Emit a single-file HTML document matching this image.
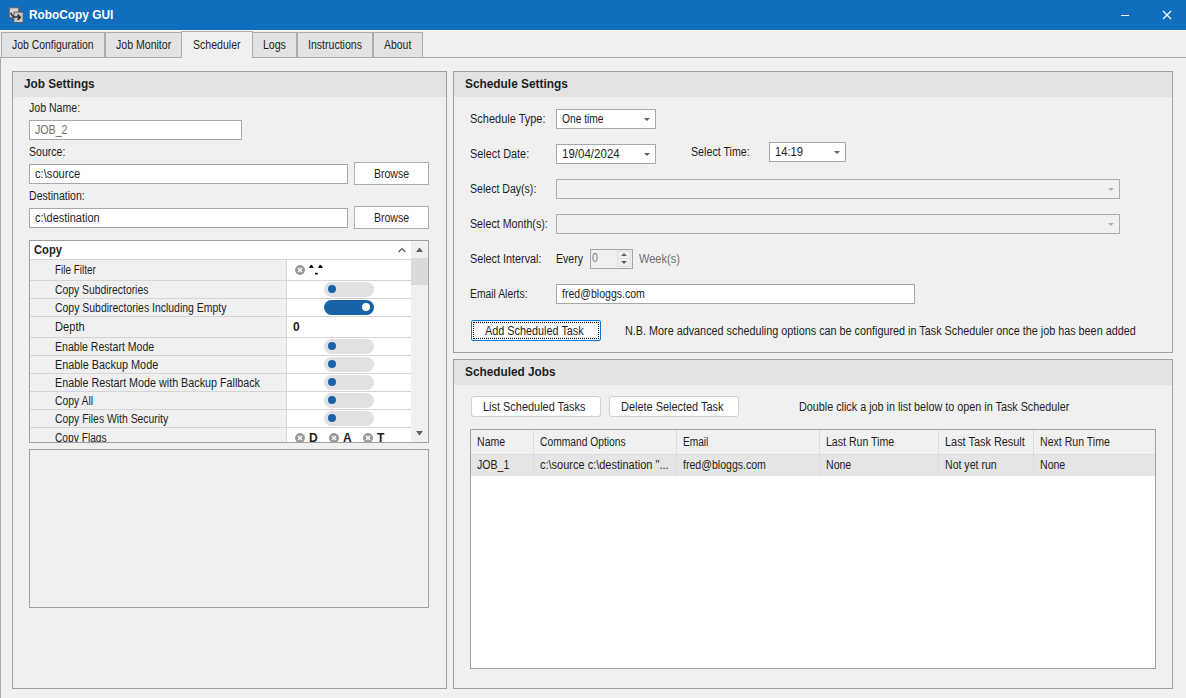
<!DOCTYPE html>
<html><head><meta charset="utf-8"><title>RoboCopy GUI</title>
<style>
html,body{margin:0;padding:0;}
body{width:1186px;height:698px;overflow:hidden;position:relative;background:#f0f0f0;font-family:"Liberation Sans",sans-serif;font-size:12px;}
.r{position:absolute;}
.t{position:absolute;white-space:nowrap;line-height:12px;transform-origin:0 0;}
</style></head><body>
<div class="r" style="left:0px;top:0px;width:1186px;height:30px;background:#116ebf;"></div>
<div class="r" style="left:0px;top:30px;width:1186px;height:1px;background:#f7f7f7;"></div>
<svg class="r" style="left:7px;top:6px" width="18" height="18" viewBox="0 0 18 18"><rect x="2.3" y="1.8" width="9.3" height="9.9" fill="#d4d4d4" stroke="#6a5f58" stroke-width="0.9"/><rect x="6.9" y="6.1" width="9.2" height="10.4" fill="#c8c8c8" stroke="#5d5650" stroke-width="0.9"/><path d="M3.6 6.8 Q5 9.6 6.8 10.8 L12.8 11.3" fill="none" stroke="#2a2a2a" stroke-width="1.5"/><path d="M10.6 8.6 L13.3 11.3 L10.6 14" fill="none" stroke="#2a2a2a" stroke-width="1.5"/></svg>
<div class="t" style="left:29px;top:9px;color:#fff;font-weight:bold;transform:scaleX(0.988);">RoboCopy GUI</div>
<div class="r" style="left:1121px;top:15px;width:8px;height:1px;background:#fff;"></div>
<svg class="r" style="left:1162px;top:10px" width="10" height="10" viewBox="0 0 10 10"><path d="M1 1 L9 9 M9 1 L1 9" stroke="#fff" stroke-width="1.1"/></svg>
<div class="r" style="left:0px;top:57px;width:1186px;height:1px;background:#acacac;"></div>
<div class="r" style="left:0px;top:57px;width:1px;height:641px;background:#acacac;"></div>
<div class="r" style="left:1px;top:32px;width:104px;height:26px;background:#e3e3e3;border:1px solid #acacac;box-sizing:border-box;"></div>
<div class="t" style="left:12px;top:39px;color:#1e1e1e;transform:scaleX(0.868);">Job Configuration</div>
<div class="r" style="left:105px;top:32px;width:77px;height:26px;background:#e3e3e3;border:1px solid #acacac;box-sizing:border-box;"></div>
<div class="t" style="left:116px;top:39px;color:#1e1e1e;transform:scaleX(0.88);">Job Monitor</div>
<div class="r" style="left:252px;top:32px;width:45px;height:26px;background:#e3e3e3;border:1px solid #acacac;box-sizing:border-box;"></div>
<div class="t" style="left:263px;top:39px;color:#1e1e1e;transform:scaleX(0.88);">Logs</div>
<div class="r" style="left:297px;top:32px;width:76px;height:26px;background:#e3e3e3;border:1px solid #acacac;box-sizing:border-box;"></div>
<div class="t" style="left:307.5px;top:39px;color:#1e1e1e;transform:scaleX(0.88);">Instructions</div>
<div class="r" style="left:373px;top:32px;width:50px;height:26px;background:#e3e3e3;border:1px solid #acacac;box-sizing:border-box;"></div>
<div class="t" style="left:384px;top:39px;color:#1e1e1e;transform:scaleX(0.87);">About</div>
<div class="r" style="left:181px;top:31px;width:72px;height:27px;background:#f0f0f0;border:1px solid #acacac;border-bottom:none;box-sizing:border-box"></div>
<div class="t" style="left:192.5px;top:39px;color:#1e1e1e;transform:scaleX(0.88);">Scheduler</div>
<div class="r" style="left:12px;top:71px;width:435px;height:618px;border:1px solid #a0a0a0;box-sizing:border-box;"></div>
<div class="r" style="left:13px;top:72px;width:433px;height:25px;background:#e3e3e3;"></div>
<div class="t" style="left:23.5px;top:78px;color:#1e1e1e;font-weight:bold;transform:scaleX(0.981);">Job Settings</div>
<div class="r" style="left:453px;top:71px;width:720px;height:282px;border:1px solid #a0a0a0;box-sizing:border-box;"></div>
<div class="r" style="left:454px;top:72px;width:718px;height:25px;background:#e3e3e3;"></div>
<div class="t" style="left:464.5px;top:78px;color:#1e1e1e;font-weight:bold;transform:scaleX(0.989);">Schedule Settings</div>
<div class="r" style="left:453px;top:359px;width:720px;height:330px;border:1px solid #a0a0a0;box-sizing:border-box;"></div>
<div class="r" style="left:454px;top:360px;width:718px;height:25px;background:#e3e3e3;"></div>
<div class="t" style="left:464.5px;top:366px;color:#1e1e1e;font-weight:bold;transform:scaleX(0.984);">Scheduled Jobs</div>
<div class="t" style="left:29px;top:102px;color:#1e1e1e;transform:scaleX(0.88);">Job Name:</div>
<div class="r" style="left:29px;top:120px;width:213px;height:20px;background:#fff;border:1px solid #a8a8a8;box-sizing:border-box;"></div>
<div class="t" style="left:35px;top:124px;color:#6d6d6d;transform:scaleX(0.885);">JOB_2</div>
<div class="t" style="left:29px;top:146px;color:#1e1e1e;transform:scaleX(0.88);">Source:</div>
<div class="r" style="left:29px;top:164px;width:319px;height:20px;background:#fff;border:1px solid #a8a8a8;box-sizing:border-box;"></div>
<div class="t" style="left:35px;top:168px;color:#1e1e1e;transform:scaleX(0.931);">c:\source</div>
<div class="r" style="left:354px;top:162px;width:75px;height:23px;background:#fff;border:1px solid #adadad;box-sizing:border-box;border-radius:0px;"></div>
<div class="t" style="left:374px;top:168px;color:#1e1e1e;transform:scaleX(0.875);">Browse</div>
<div class="t" style="left:29px;top:190px;color:#1e1e1e;transform:scaleX(0.88);">Destination:</div>
<div class="r" style="left:29px;top:208px;width:319px;height:20px;background:#fff;border:1px solid #a8a8a8;box-sizing:border-box;"></div>
<div class="t" style="left:35px;top:212px;color:#1e1e1e;transform:scaleX(0.914);">c:\destination</div>
<div class="r" style="left:354px;top:206px;width:75px;height:23px;background:#fff;border:1px solid #adadad;box-sizing:border-box;border-radius:0px;"></div>
<div class="t" style="left:374px;top:212px;color:#1e1e1e;transform:scaleX(0.875);">Browse</div>
<div class="r" style="left:29px;top:240px;width:400px;height:203px;border:1px solid #a0a0a0;box-sizing:border-box;background:#fff;overflow:hidden">
<div class="t" style="left:4px;top:3px;color:#1e1e1e;font-weight:bold;transform:scaleX(0.93);">Copy</div>
<svg class="r" style="left:368px;top:6px" width="8" height="6" viewBox="0 0 8 6"><path d="M0.6 5 L4 1.5 L7.4 5" fill="none" stroke="#555" stroke-width="1.2"/></svg>
<div class="r" style="left:0px;top:18px;width:381px;height:1px;background:#d4d4d4"></div>
<div class="r" style="left:0px;top:19px;width:256px;height:20px;background:#f0f0f0"></div>
<div class="r" style="left:256px;top:19px;width:1px;height:20px;background:#d4d4d4"></div>
<div class="t" style="left:25px;top:23px;color:#1e1e1e;transform:scaleX(0.825);">File Filter</div>
<svg class="r" style="left:265px;top:24px" width="10" height="10" viewBox="0 0 10 10"><circle cx="5" cy="5" r="5" fill="#999"/><path d="M3 3 L7 7 M7 3 L3 7" stroke="#fff" stroke-width="1.4"/></svg>
<svg class="r" style="left:278px;top:22px" width="16" height="13" viewBox="0 0 16 13"><path d="M1.1 5 Q3.3 -1.6 5.5 5 Z" fill="#000"/><path d="M10.1 5 Q12.4 -1.6 14.7 5 Z" fill="#000"/><rect x="7" y="9.8" width="2.8" height="1.6" fill="#000"/></svg>
<div class="r" style="left:0px;top:39px;width:381px;height:1px;background:#d4d4d4"></div>
<div class="r" style="left:0px;top:40px;width:256px;height:17px;background:#f0f0f0"></div>
<div class="r" style="left:256px;top:40px;width:1px;height:17px;background:#d4d4d4"></div>
<div class="t" style="left:25px;top:43px;color:#1e1e1e;transform:scaleX(0.864);">Copy Subdirectories</div>
<div class="r" style="left:294px;top:41px;width:50px;height:15px;border-radius:8px;background:#e1e1e1"></div>
<div class="r" style="left:298px;top:44px;width:8px;height:8px;border-radius:50%;background:#1862a8"></div>
<div class="r" style="left:0px;top:57px;width:381px;height:1px;background:#d4d4d4"></div>
<div class="r" style="left:0px;top:58px;width:256px;height:17px;background:#f0f0f0"></div>
<div class="r" style="left:256px;top:58px;width:1px;height:17px;background:#d4d4d4"></div>
<div class="t" style="left:25px;top:61px;color:#1e1e1e;transform:scaleX(0.871);">Copy Subdirectories Including Empty</div>
<div class="r" style="left:294px;top:59px;width:50px;height:15px;border-radius:8px;background:#1862a8"></div>
<div class="r" style="left:332px;top:62px;width:8px;height:8px;border-radius:50%;background:#fff"></div>
<div class="r" style="left:0px;top:75px;width:381px;height:1px;background:#d4d4d4"></div>
<div class="r" style="left:0px;top:76px;width:256px;height:20px;background:#f0f0f0"></div>
<div class="r" style="left:256px;top:76px;width:1px;height:20px;background:#d4d4d4"></div>
<div class="t" style="left:25px;top:80px;color:#1e1e1e;transform:scaleX(0.926);">Depth</div>
<div class="t" style="left:263px;top:80px;color:#1e1e1e;font-weight:bold;transform:scaleX(1);">0</div>
<div class="r" style="left:0px;top:96px;width:381px;height:1px;background:#d4d4d4"></div>
<div class="r" style="left:0px;top:97px;width:256px;height:17px;background:#f0f0f0"></div>
<div class="r" style="left:256px;top:97px;width:1px;height:17px;background:#d4d4d4"></div>
<div class="t" style="left:25px;top:100px;color:#1e1e1e;transform:scaleX(0.88);">Enable Restart Mode</div>
<div class="r" style="left:294px;top:98px;width:50px;height:15px;border-radius:8px;background:#e1e1e1"></div>
<div class="r" style="left:298px;top:101px;width:8px;height:8px;border-radius:50%;background:#1862a8"></div>
<div class="r" style="left:0px;top:114px;width:381px;height:1px;background:#d4d4d4"></div>
<div class="r" style="left:0px;top:115px;width:256px;height:17px;background:#f0f0f0"></div>
<div class="r" style="left:256px;top:115px;width:1px;height:17px;background:#d4d4d4"></div>
<div class="t" style="left:25px;top:118px;color:#1e1e1e;transform:scaleX(0.905);">Enable Backup Mode</div>
<div class="r" style="left:294px;top:116px;width:50px;height:15px;border-radius:8px;background:#e1e1e1"></div>
<div class="r" style="left:298px;top:119px;width:8px;height:8px;border-radius:50%;background:#1862a8"></div>
<div class="r" style="left:0px;top:132px;width:381px;height:1px;background:#d4d4d4"></div>
<div class="r" style="left:0px;top:133px;width:256px;height:17px;background:#f0f0f0"></div>
<div class="r" style="left:256px;top:133px;width:1px;height:17px;background:#d4d4d4"></div>
<div class="t" style="left:25px;top:136px;color:#1e1e1e;transform:scaleX(0.896);">Enable Restart Mode with Backup Fallback</div>
<div class="r" style="left:294px;top:134px;width:50px;height:15px;border-radius:8px;background:#e1e1e1"></div>
<div class="r" style="left:298px;top:137px;width:8px;height:8px;border-radius:50%;background:#1862a8"></div>
<div class="r" style="left:0px;top:150px;width:381px;height:1px;background:#d4d4d4"></div>
<div class="r" style="left:0px;top:151px;width:256px;height:17px;background:#f0f0f0"></div>
<div class="r" style="left:256px;top:151px;width:1px;height:17px;background:#d4d4d4"></div>
<div class="t" style="left:25px;top:154px;color:#1e1e1e;transform:scaleX(0.864);">Copy All</div>
<div class="r" style="left:294px;top:152px;width:50px;height:15px;border-radius:8px;background:#e1e1e1"></div>
<div class="r" style="left:298px;top:155px;width:8px;height:8px;border-radius:50%;background:#1862a8"></div>
<div class="r" style="left:0px;top:168px;width:381px;height:1px;background:#d4d4d4"></div>
<div class="r" style="left:0px;top:169px;width:256px;height:17px;background:#f0f0f0"></div>
<div class="r" style="left:256px;top:169px;width:1px;height:17px;background:#d4d4d4"></div>
<div class="t" style="left:25px;top:172px;color:#1e1e1e;transform:scaleX(0.866);">Copy Files With Security</div>
<div class="r" style="left:294px;top:170px;width:50px;height:15px;border-radius:8px;background:#e1e1e1"></div>
<div class="r" style="left:298px;top:173px;width:8px;height:8px;border-radius:50%;background:#1862a8"></div>
<div class="r" style="left:0px;top:186px;width:381px;height:1px;background:#d4d4d4"></div>
<div class="r" style="left:0px;top:187px;width:256px;height:20px;background:#f0f0f0"></div>
<div class="r" style="left:256px;top:187px;width:1px;height:20px;background:#d4d4d4"></div>
<div class="t" style="left:25px;top:191px;color:#1e1e1e;transform:scaleX(0.85);">Copy Flags</div>
<svg class="r" style="left:265px;top:192px" width="10" height="10" viewBox="0 0 10 10"><circle cx="5" cy="5" r="5" fill="#999"/><path d="M3 3 L7 7 M7 3 L3 7" stroke="#fff" stroke-width="1.4"/></svg>
<div class="t" style="left:279px;top:191px;color:#1e1e1e;font-weight:bold;transform:scaleX(1);">D</div>
<svg class="r" style="left:299px;top:192px" width="10" height="10" viewBox="0 0 10 10"><circle cx="5" cy="5" r="5" fill="#999"/><path d="M3 3 L7 7 M7 3 L3 7" stroke="#fff" stroke-width="1.4"/></svg>
<div class="t" style="left:313px;top:191px;color:#1e1e1e;font-weight:bold;transform:scaleX(1);">A</div>
<svg class="r" style="left:333px;top:192px" width="10" height="10" viewBox="0 0 10 10"><circle cx="5" cy="5" r="5" fill="#999"/><path d="M3 3 L7 7 M7 3 L3 7" stroke="#fff" stroke-width="1.4"/></svg>
<div class="t" style="left:347px;top:191px;color:#1e1e1e;font-weight:bold;transform:scaleX(1);">T</div>
<div class="r" style="left:381px;top:0px;width:17px;height:201px;background:#f0f0f0"></div>
<div class="r" style="left:381px;top:17px;width:17px;height:27px;background:#dadada"></div>
<svg class="r" style="left:386px;top:6px" width="7" height="5" viewBox="0 0 7 5"><path d="M0 5 L3.5 0.5 L7 5 Z" fill="#606060"/></svg>
<svg class="r" style="left:386px;top:190px" width="7" height="5" viewBox="0 0 7 5"><path d="M0 0 L3.5 4.5 L7 0 Z" fill="#606060"/></svg>
</div>
<div class="r" style="left:29px;top:449px;width:400px;height:159px;border:1px solid #a0a0a0;box-sizing:border-box;"></div>
<div class="t" style="left:469.5px;top:113px;color:#1e1e1e;transform:scaleX(0.915);">Schedule Type:</div>
<div class="r" style="left:556px;top:109px;width:100px;height:20px;background:#fff;border:1px solid #a8a8a8;box-sizing:border-box;"></div>
<svg class="r" style="left:644px;top:118px" width="6" height="3" viewBox="0 0 6 3"><path d="M0 0 L6 0 L3 3 Z" fill="#606060"/></svg>
<div class="t" style="left:562px;top:113px;color:#1e1e1e;transform:scaleX(0.853);">One time</div>
<div class="t" style="left:469.5px;top:148px;color:#1e1e1e;transform:scaleX(0.905);">Select Date:</div>
<div class="r" style="left:556px;top:144px;width:100px;height:20px;background:#fff;border:1px solid #a8a8a8;box-sizing:border-box;"></div>
<svg class="r" style="left:644px;top:153px" width="6" height="3" viewBox="0 0 6 3"><path d="M0 0 L6 0 L3 3 Z" fill="#606060"/></svg>
<div class="t" style="left:562px;top:148px;color:#1e1e1e;transform:scaleX(0.961);">19/04/2024</div>
<div class="t" style="left:690.5px;top:146px;color:#1e1e1e;transform:scaleX(0.89);">Select Time:</div>
<div class="r" style="left:769px;top:142px;width:77px;height:20px;background:#fff;border:1px solid #a8a8a8;box-sizing:border-box;"></div>
<svg class="r" style="left:834px;top:151px" width="6" height="3" viewBox="0 0 6 3"><path d="M0 0 L6 0 L3 3 Z" fill="#606060"/></svg>
<div class="t" style="left:775px;top:146px;color:#1e1e1e;transform:scaleX(0.936);">14:19</div>
<div class="t" style="left:469.5px;top:183px;color:#1e1e1e;transform:scaleX(0.88);">Select Day(s):</div>
<div class="r" style="left:556px;top:179px;width:564px;height:20px;background:#f0f0f0;border:1px solid #adadad;box-sizing:border-box;"></div>
<svg class="r" style="left:1108px;top:188px" width="6" height="3" viewBox="0 0 6 3"><path d="M0 0 L6 0 L3 3 Z" fill="#b0b0b0"/></svg>
<div class="t" style="left:469.5px;top:218px;color:#1e1e1e;transform:scaleX(0.89);">Select Month(s):</div>
<div class="r" style="left:556px;top:214px;width:564px;height:20px;background:#f0f0f0;border:1px solid #adadad;box-sizing:border-box;"></div>
<svg class="r" style="left:1108px;top:223px" width="6" height="3" viewBox="0 0 6 3"><path d="M0 0 L6 0 L3 3 Z" fill="#b0b0b0"/></svg>
<div class="t" style="left:469.5px;top:253px;color:#1e1e1e;transform:scaleX(0.9);">Select Interval:</div>
<div class="t" style="left:556px;top:253px;color:#1e1e1e;transform:scaleX(0.88);">Every</div>
<div class="r" style="left:590px;top:249px;width:43px;height:20px;background:#f0f0f0;border:1px solid #a5a5a5;box-sizing:border-box;"></div>
<div class="r" style="left:617px;top:251px;width:14px;height:16px;background:#f0f0f0;border:1px solid #dcdcdc;box-sizing:border-box;"></div>
<div class="r" style="left:617px;top:258px;width:14px;height:1px;background:#dcdcdc;"></div>
<svg class="r" style="left:621px;top:253px" width="6" height="3" viewBox="0 0 6 3"><path d="M0 3 L3 0 L6 3 Z" fill="#606060"/></svg>
<svg class="r" style="left:621px;top:261px" width="6" height="3" viewBox="0 0 6 3"><path d="M0 0 L6 0 L3 3 Z" fill="#606060"/></svg>
<div class="t" style="left:592px;top:252px;color:#7a7a7a;transform:scaleX(0.88);">0</div>
<div class="t" style="left:639px;top:253px;color:#6d6d6d;transform:scaleX(0.92);">Week(s)</div>
<div class="t" style="left:469.5px;top:288px;color:#1e1e1e;transform:scaleX(0.863);">Email Alerts:</div>
<div class="r" style="left:556px;top:284px;width:359px;height:20px;background:#fff;border:1px solid #a8a8a8;box-sizing:border-box;"></div>
<div class="t" style="left:562px;top:288px;color:#1e1e1e;transform:scaleX(0.88);">fred@bloggs.com</div>
<div class="r" style="left:471px;top:320px;width:130px;height:21px;background:#fdfdfd;border:1px solid #0078d7;box-sizing:border-box;border-radius:2px;"></div>
<div class="r" style="left:473px;top:322px;width:126px;height:17px;box-sizing:border-box;border:1px dotted #000"></div>
<div class="t" style="left:485px;top:325px;color:#1e1e1e;transform:scaleX(0.904);">Add Scheduled Task</div>
<div class="t" style="left:625px;top:325px;color:#1e1e1e;transform:scaleX(0.901);">N.B. More advanced scheduling options can be configured in Task Scheduler once the job has been added</div>
<div class="r" style="left:471px;top:396px;width:130px;height:21px;background:#fff;border:1px solid #d0d0d0;box-sizing:border-box;border-radius:3px;"></div>
<div class="t" style="left:483px;top:401px;color:#1e1e1e;transform:scaleX(0.911);">List Scheduled Tasks</div>
<div class="r" style="left:609px;top:396px;width:130px;height:21px;background:#fff;border:1px solid #d0d0d0;box-sizing:border-box;border-radius:3px;"></div>
<div class="t" style="left:621px;top:401px;color:#1e1e1e;transform:scaleX(0.911);">Delete Selected Task</div>
<div class="t" style="left:799px;top:401px;color:#1e1e1e;transform:scaleX(0.899);">Double click a job in list below to open in Task Scheduler</div>
<div class="r" style="left:470px;top:429px;width:686px;height:240px;background:#fff;border:1px solid #a0a0a0;box-sizing:border-box;"></div>
<div class="r" style="left:471px;top:430px;width:684px;height:24px;background:#f0f0f0;"></div>
<div class="r" style="left:471px;top:454px;width:684px;height:1px;background:#dcdcdc;"></div>
<div class="r" style="left:471px;top:455px;width:684px;height:21px;background:#e5e5e5;"></div>
<div class="t" style="left:477px;top:436px;color:#1e1e1e;transform:scaleX(0.88);">Name</div>
<div class="t" style="left:477px;top:459px;color:#1e1e1e;transform:scaleX(0.88);">JOB_1</div>
<div class="r" style="left:533px;top:430px;width:1px;height:46px;background:#dcdcdc;"></div>
<div class="t" style="left:540px;top:436px;color:#1e1e1e;transform:scaleX(0.856);">Command Options</div>
<div class="t" style="left:540px;top:459px;color:#1e1e1e;transform:scaleX(0.916);">c:\source c:\destination "...</div>
<div class="r" style="left:676px;top:430px;width:1px;height:46px;background:#dcdcdc;"></div>
<div class="t" style="left:683px;top:436px;color:#1e1e1e;transform:scaleX(0.845);">Email</div>
<div class="t" style="left:683px;top:459px;color:#1e1e1e;transform:scaleX(0.88);">fred@bloggs.com</div>
<div class="r" style="left:819px;top:430px;width:1px;height:46px;background:#dcdcdc;"></div>
<div class="t" style="left:826px;top:436px;color:#1e1e1e;transform:scaleX(0.88);">Last Run Time</div>
<div class="t" style="left:826px;top:459px;color:#1e1e1e;transform:scaleX(0.88);">None</div>
<div class="r" style="left:938px;top:430px;width:1px;height:46px;background:#dcdcdc;"></div>
<div class="t" style="left:945px;top:436px;color:#1e1e1e;transform:scaleX(0.909);">Last Task Result</div>
<div class="t" style="left:945px;top:459px;color:#1e1e1e;transform:scaleX(0.88);">Not yet run</div>
<div class="r" style="left:1033px;top:430px;width:1px;height:46px;background:#dcdcdc;"></div>
<div class="t" style="left:1040px;top:436px;color:#1e1e1e;transform:scaleX(0.88);">Next Run Time</div>
<div class="t" style="left:1040px;top:459px;color:#1e1e1e;transform:scaleX(0.88);">None</div>
</body></html>
